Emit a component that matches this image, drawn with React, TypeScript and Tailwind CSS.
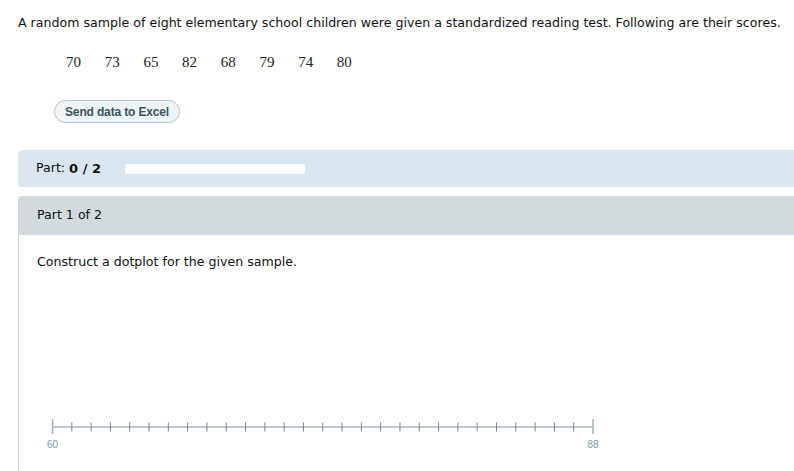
import React from "react";

const scores = [70, 73, 65, 82, 68, 79, 74, 80];

function Axis() {
  const x0 = 52.5;
  const x1 = 593;
  const n = 28;
  const step = (x1 - x0) / n;
  const ticks = Array.from({ length: n + 1 }, (_, i) => x0 + i * step);
  return (
    <svg width="640" height="40" className="block" style={{ marginLeft: -37 }}>
      <line x1={x0} y1={12} x2={x1} y2={12} stroke="#a7b9bf" strokeWidth={1.5} />
      {ticks.map((x, i) => {
        const end = i === 0 || i === n;
        return (
          <line
            key={i}
            x1={x}
            x2={x}
            y1={end ? 4 : 7.5}
            y2={end ? 19 : 16.5}
            stroke={end ? "#9fb2b9" : "#6f8a93"}
            strokeWidth={end ? 1.5 : 1}
          />
        );
      })}
      <text x={x0} y={33} fontSize="10" fill="#7d98a6" textAnchor="middle" fontFamily="Liberation Sans, Arial, sans-serif">60</text>
      <text x={x1} y={33} fontSize="10" fill="#7d98a6" textAnchor="middle" fontFamily="Liberation Sans, Arial, sans-serif">88</text>
    </svg>
  );
}

export default function App() {
  return (
    <div className="w-[794px] h-[471px] overflow-hidden bg-white text-[#111] text-[12.6px]" style={{ fontFamily: "'DejaVu Sans', Verdana, sans-serif" }}>
      <div className="pl-[18px] pt-[14px]">
        <p className="leading-[18px] whitespace-nowrap">A random sample of eight elementary school children were given a standardized reading test. Following are their scores.</p>
        <div className="flex gap-[23.7px] pl-[48px] mt-[21px] text-[15px] leading-[18px] text-[#222]" style={{ fontFamily: "'Liberation Serif', 'Times New Roman', serif" }}>
          {scores.map((s, i) => (
            <span key={i}>{s}</span>
          ))}
        </div>
        <div className="pl-[36px] mt-[29px]">
          <button className="h-[23px] px-[10px] rounded-full border border-[#b3c3c9] bg-[#eef3f5] text-[#3a5560] text-[12px] font-semibold tracking-[-0.15px] leading-none" style={{ fontFamily: "'Liberation Sans', Arial, sans-serif" }}>
            Send data to Excel
          </button>
        </div>
        <div className="mt-[27px] h-[37px] bg-[#dae6ef] rounded-l-[4px] flex items-center pl-[18px]">
          <span>Part: </span>
          <span className="font-bold ml-[4px] text-[13px]">0 / 2</span>
          <div className="ml-[24px] w-[180px] h-[10px] bg-white rounded-[2px]"></div>
        </div>
        <div className="mt-[9px] h-[39px] bg-[#d2dadd] rounded-tl-[4px] flex items-center pl-[19px]">
          <span>Part 1 of 2</span>
        </div>
        <div className="border-l border-[#d2dadd] pl-[18px] pt-[19px] h-[300px]">
          <p className="leading-[16px]">Construct a dotplot for the given sample.</p>
          <div className="mt-[145px]">
            <Axis />
          </div>
        </div>
      </div>
    </div>
  );
}
